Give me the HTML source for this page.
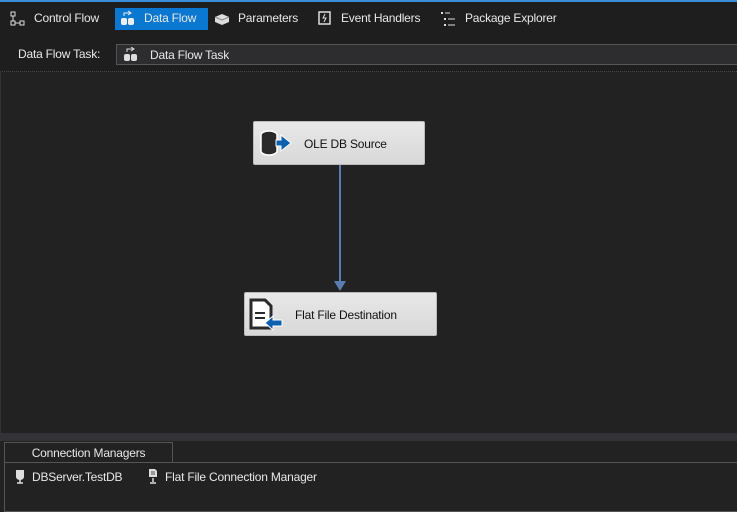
<!DOCTYPE html>
<html><head><style>
*{margin:0;padding:0;box-sizing:border-box}
body{width:737px;height:512px;background:#1e1e1e;font-family:"Liberation Sans",sans-serif;font-size:12px;color:#e8e8e8;position:relative;overflow:hidden;letter-spacing:-0.2px}
.a{position:absolute}
.tab{position:absolute;top:8px;height:22px;line-height:20px;white-space:nowrap}
.box{position:absolute;background:linear-gradient(#e8e8e8,#d8d8d8);border:1px solid #bbb;border-radius:2px;color:#111;font-size:12px}
</style></head><body>
<div class="a" style="left:0;top:0;width:737px;height:2px;background:#3a8fd8"></div>
<div class="tab" style="left:10px"><svg class="a" style="left:0;top:3px" width="16" height="16"><rect x="1" y="1" width="4" height="4" fill="none" stroke="#ddd"/><rect x="1" y="10" width="4" height="4" fill="none" stroke="#ddd"/><rect x="10" y="10" width="4" height="4" fill="none" stroke="#ddd"/><path d="M3 5v5M5 12h5" stroke="#ddd"/></svg><span style="margin-left:24px">Control Flow</span></div>
<div class="tab" style="left:115px;width:93px;background:#0a78d0"><svg class="a" style="left:4px;top:2px" width="18" height="17"><rect x="2" y="8" width="6" height="7" rx="2" fill="#eee"/><rect x="9" y="8" width="6" height="7" rx="2" fill="#eee"/><path d="M5 6V3h6M9 1l3 2-3 2" stroke="#eee" fill="none"/></svg><span style="margin-left:29px">Data Flow</span></div>
<div class="tab" style="left:214px"><svg class="a" style="left:0;top:4px" width="16" height="14"><path d="M1 5l7-3 7 3v5l-7 3-7-3z" fill="#ddd"/><path d="M1 5l7 3 7-3" stroke="#888" fill="none"/></svg><span style="margin-left:24px">Parameters</span></div>
<div class="tab" style="left:318px"><svg class="a" style="left:0;top:3px" width="14" height="15"><rect x="1" y="1" width="11" height="12" fill="none" stroke="#ddd" stroke-width="1.5"/><path d="M7 3l-2 4h3l-2 4" stroke="#ddd" fill="none"/></svg><span style="margin-left:23px">Event Handlers</span></div>
<div class="tab" style="left:440px"><svg class="a" style="left:0;top:2px" width="18" height="18"><rect x="1" y="2" width="2" height="2" fill="#ddd"/><rect x="4" y="8" width="2" height="2" fill="#ddd"/><rect x="4" y="14" width="2" height="2" fill="#ddd"/><path d="M5 3h5M8 9h7M8 15h7" stroke="#ddd"/></svg><span style="margin-left:25px">Package Explorer</span></div>
<div class="a" style="left:18px;top:47px">Data Flow Task:</div>
<div class="a" style="left:116px;top:44px;width:625px;height:21px;background:#2d2d30;border:1px solid #555"><svg class="a" style="left:5px;top:2px" width="18" height="15"><rect x="2" y="7" width="6" height="7" rx="2" fill="#ddd"/><rect x="9" y="7" width="6" height="7" rx="2" fill="#ddd"/><path d="M5 5V2h6M9 0l3 2-3 2" stroke="#ddd" fill="none"/></svg><span class="a" style="left:33px;top:3px">Data Flow Task</span></div>
<div class="a" style="left:0;top:71px;width:737px;height:362px;background:#222;border-top:1px dotted #444;border-left:1px solid #333"></div>
<div class="a" style="left:339px;top:165px;width:2px;height:118px;background:#5a7db0"></div>
<svg class="a" style="left:334px;top:281px" width="12" height="10"><path d="M0 0h12L6 10z" fill="#5a7db0"/></svg>
<div class="box" style="left:253px;top:121px;width:172px;height:44px"><svg class="a" style="left:5px;top:7px" width="34" height="30"><path d="M2 6a8 4 0 0 1 16 0v16a8 4 0 0 1-16 0z" fill="#2a2a2a" stroke="#fff" stroke-width="1.5"/><path d="M17 11h5V6l10 8-10 8v-5h-5z" fill="#0d5fb0" stroke="#fff"/></svg><span class="a" style="left:50px;top:15px">OLE DB Source</span></div>
<div class="box" style="left:244px;top:292px;width:193px;height:44px"><svg class="a" style="left:4px;top:5px" width="34" height="34"><path d="M2 2h14l6 6v22H2z" fill="#fff" stroke="#2a2a2a" stroke-width="3"/><path d="M6 15h10M6 20h10" stroke="#2a2a2a" stroke-width="2"/><path d="M33 22h-9v-4l-8 7 8 7v-4h9z" fill="#0d5fb0" stroke="#fff"/></svg><span class="a" style="left:50px;top:15px">Flat File Destination</span></div>
<div class="a" style="left:0;top:433px;width:737px;height:8px;background:#333337"></div>
<div class="a" style="left:0;top:441px;width:737px;height:71px;background:#222"></div>
<div class="a" style="left:4px;top:442px;width:169px;height:21px;border:1px solid #555;border-bottom:none;text-align:center;line-height:20px">Connection Managers</div>
<div class="a" style="left:4px;top:462px;width:733px;height:50px;border:1px solid #555;border-right:none"></div>
<svg class="a" style="left:15px;top:469px" width="10" height="16"><path d="M1 1h8v7a4 3 0 0 1-8 0z" fill="#ddd"/><path d="M5 10v4M2 14h6" stroke="#ddd" stroke-width="1.5"/></svg>
<div class="a" style="left:32px;top:470px">DBServer.TestDB</div>
<svg class="a" style="left:148px;top:468px" width="10" height="17"><path d="M1 1h6l2 2v6H1z" fill="#ddd"/><path d="M3 4h4M3 6h4" stroke="#555"/><path d="M5 10v4M2 15h6" stroke="#ddd" stroke-width="1.5"/></svg>
<div class="a" style="left:165px;top:470px">Flat File Connection Manager</div>
</body></html>
